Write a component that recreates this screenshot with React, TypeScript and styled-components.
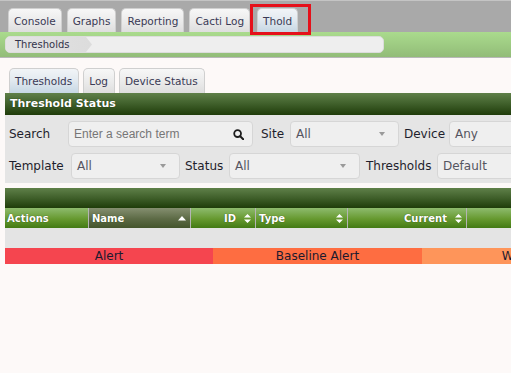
import React from "react";
import styled, { createGlobalStyle, css } from "styled-components";

const GlobalStyle = createGlobalStyle`
  html, body { margin: 0; padding: 0; }
  body {
    background: #fdf9f8;
    font-family: "DejaVu Sans", Verdana, sans-serif;
    overflow: hidden;
    width: 511px;
    height: 373px;
  }
`;

const TopBar = styled.div`
  height: 32px;
  background: #a9a9a9;
  border-top: 1px solid #c4c4c4;
  box-sizing: border-box;
  display: flex;
  align-items: flex-end;
  padding-left: 8px;
  gap: 5px;
`;

const tabBase = css<{ $active?: boolean }>`
  display: flex;
  align-items: center;
  box-sizing: border-box;
  height: 24px;
  border: 1px solid #cfcfcf;
  border-bottom: none;
  border-radius: 5px 5px 0 0;
  font-size: 10.5px;
  color: #3a3a55;
  white-space: nowrap;
  background: ${(p) =>
    p.$active
      ? "linear-gradient(#f1f4f7, #e3eaf0 45%, #c6d7e4)"
      : "linear-gradient(#f7f7f7, #e9e9e9 60%, #dedede)"};
`;

const Tab = styled.div<{ $active?: boolean }>`
  ${tabBase};
  padding: 0 5px;
`;

const TholdWrap = styled.div`
  position: relative;
  margin-left: 2px;
  &::after {
    content: "";
    position: absolute;
    left: -7px;
    top: -4px;
    width: 61px;
    height: 31px;
    box-sizing: border-box;
    border: 3px solid #e5101a;
  }
`;

const NavBar = styled.div`
  height: 26px;
  box-sizing: border-box;
  background: linear-gradient(#aadb8d, #92bc78);
  border-bottom: 1px solid #b8b8b8;
  padding: 4px 0 0 5px;
`;

const Breadcrumb = styled.div`
  width: 379px;
  height: 17px;
  box-sizing: border-box;
  background: #eeeeee;
  border: 1px solid #dcdcdc;
  border-radius: 5px;
  overflow: hidden;
  display: flex;
`;

const Crumb = styled.div`
  height: 100%;
  width: 86px;
  padding-left: 9px;
  box-sizing: border-box;
  font-size: 10px;
  line-height: 15px;
  color: #33334a;
  background: linear-gradient(to right, #e4e4e4, #dcdcdc);
  clip-path: polygon(0 0, 80px 0, 86px 50%, 80px 100%, 0 100%);
`;

const Main = styled.div`
  padding: 10px 0 0 5px;
  width: 720px;
`;

const SubTabs = styled.div`
  display: flex;
  gap: 4px;
  padding-left: 4px;
  height: 25px;
  align-items: flex-end;
`;

const SubTab = styled.div<{ $active?: boolean }>`
  ${tabBase};
  height: 25px;
  padding: 0 6px 0 5px;
`;

const greenHead = css`
  background: linear-gradient(#5f8049, #3f5f2a 50%, #1f3c0a);
`;

const PanelHeader = styled.div`
  ${greenHead};
  height: 22px;
  padding-left: 5px;
  font-size: 11px;
  font-weight: bold;
  line-height: 22px;
  color: #ffffff;
  text-shadow: 0 0 1px #0d2000;
`;

const Filters = styled.div`
  background: #e5e5e5;
  padding: 6px 0 4px 4px;
  display: flex;
  flex-direction: column;
  gap: 6px;
`;

const FilterRow = styled.div`
  display: flex;
  align-items: center;
  height: 26px;
`;

const Label = styled.div<{ $w: number; $ml?: number }>`
  width: ${(p) => p.$w}px;
  margin-left: ${(p) => p.$ml ?? 0}px;
  font-size: 12px;
  color: #1e1e2c;
  white-space: nowrap;
`;

const Field = styled.div<{ $w: number }>`
  position: relative;
  width: ${(p) => p.$w}px;
  height: 26px;
  box-sizing: border-box;
  border: 1px solid #d6d6d6;
  border-radius: 4px;
  background: #efefef;
  display: flex;
  align-items: center;
  padding: 0 8px 0 5px;
  font-size: 12px;
  color: #555560;
`;

const Placeholder = styled.span`
  font-family: "Liberation Sans", Arial, sans-serif;
  color: #767676;
  flex: 1;
`;

const Value = styled.span`
  flex: 1;
`;

const Caret = styled.span`
  width: 0;
  height: 0;
  border-left: 3.5px solid transparent;
  border-right: 3.5px solid transparent;
  border-top: 4px solid #9a9a9a;
  margin-right: 5px;
`;

const Gap = styled.div`
  height: 5px;
`;

const TableTitle = styled.div`
  ${greenHead};
  height: 20px;
`;

const HeaderRow = styled.div`
  display: flex;
  height: 20px;
`;

const HeadCell = styled.div<{ $w?: number; $sorted?: boolean; $right?: boolean }>`
  ${(p) => (p.$w ? `width: ${p.$w}px;` : "flex: 1;")}
  box-sizing: border-box;
  border-right: 1px solid #b4b4b4;
  background: ${(p) =>
    p.$sorted
      ? "linear-gradient(#858f70, #5c6a45 55%, #44552c)"
      : "linear-gradient(#8ebb6e, #66992f 55%, #437a14)"};
  display: flex;
  align-items: center;
  justify-content: ${(p) => (p.$right ? "flex-end" : "space-between")};
  gap: 8px;
  padding: 0 4px 0 3px;
  font-size: 10px;
  font-weight: bold;
  color: #ffffff;
  text-shadow: 0 0 1px #203808;
  white-space: nowrap;
  &:first-child { padding-left: 2px; }
`;

const EmptyRow = styled.div`
  height: 20px;
  background: #e4e4e4;
`;

const Legend = styled.div`
  display: flex;
  height: 16px;
`;

const LegendCell = styled.div<{ $bg: string; $w: number }>`
  width: ${(p) => p.$w}px;
  flex-shrink: 0;
  background: ${(p) => p.$bg};
  text-align: center;
  font-size: 12px;
  line-height: 16px;
  color: #1c1a2e;
`;

const SortBoth = () => (
  <svg width="7" height="9" viewBox="0 0 7 9">
    <path d="M3.5 0 L7 3.6 H0 Z M3.5 9 L0 5.4 H7 Z" fill="#ffffff" />
  </svg>
);

const SortUp = () => (
  <svg width="8" height="5" viewBox="0 0 8 5">
    <path d="M4 0 L8 4.5 H0 Z" fill="#ffffff" />
  </svg>
);

const SearchIcon = () => (
  <svg width="11" height="11" viewBox="0 0 11 11">
    <circle cx="4.6" cy="4.6" r="3.4" fill="none" stroke="#1d1d1d" strokeWidth="1.8" />
    <path d="M7.2 7.2 L10.2 10.2" stroke="#1d1d1d" strokeWidth="2" strokeLinecap="round" />
  </svg>
);

export default function App() {
  return (
    <>
      <GlobalStyle />
      <TopBar>
        <Tab>Console</Tab>
        <Tab>Graphs</Tab>
        <Tab>Reporting</Tab>
        <Tab>Cacti Log</Tab>
        <TholdWrap>
          <Tab $active>Thold</Tab>
        </TholdWrap>
      </TopBar>
      <NavBar>
        <Breadcrumb>
          <Crumb>Thresholds</Crumb>
        </Breadcrumb>
      </NavBar>
      <Main>
        <SubTabs>
          <SubTab $active>Thresholds</SubTab>
          <SubTab>Log</SubTab>
          <SubTab>Device Status</SubTab>
        </SubTabs>
        <PanelHeader>Threshold Status</PanelHeader>
        <Filters>
          <FilterRow>
            <Label $w={59}>Search</Label>
            <Field $w={185}>
              <Placeholder>Enter a search term</Placeholder>
              <SearchIcon />
            </Field>
            <Label $w={29} $ml={8}>Site</Label>
            <Field $w={109}>
              <Value>All</Value>
              <Caret />
            </Field>
            <Label $w={45} $ml={5}>Device</Label>
            <Field $w={160}>
              <Value>Any</Value>
            </Field>
          </FilterRow>
          <FilterRow>
            <Label $w={62}>Template</Label>
            <Field $w={109}>
              <Value>All</Value>
              <Caret />
            </Field>
            <Label $w={44} $ml={5}>Status</Label>
            <Field $w={131}>
              <Value>All</Value>
              <Caret />
            </Field>
            <Label $w={71} $ml={6}>Thresholds</Label>
            <Field $w={160}>
              <Value>Default</Value>
            </Field>
          </FilterRow>
        </Filters>
        <Gap />
        <TableTitle />
        <HeaderRow>
          <HeadCell $w={84}>Actions</HeadCell>
          <HeadCell $w={102} $sorted>
            Name
            <SortUp />
          </HeadCell>
          <HeadCell $w={65} $right>
            ID
            <SortBoth />
          </HeadCell>
          <HeadCell $w={92}>
            Type
            <SortBoth />
          </HeadCell>
          <HeadCell $w={119} $right>
            Current
            <SortBoth />
          </HeadCell>
          <HeadCell />
        </HeaderRow>
        <EmptyRow />
        <Legend>
          <LegendCell $bg="#f5454f" $w={208}>Alert</LegendCell>
          <LegendCell $bg="#fe6d41" $w={209}>Baseline Alert</LegendCell>
          <LegendCell $bg="#fe955a" $w={209}>Warning</LegendCell>
        </Legend>
      </Main>
    </>
  );
}
